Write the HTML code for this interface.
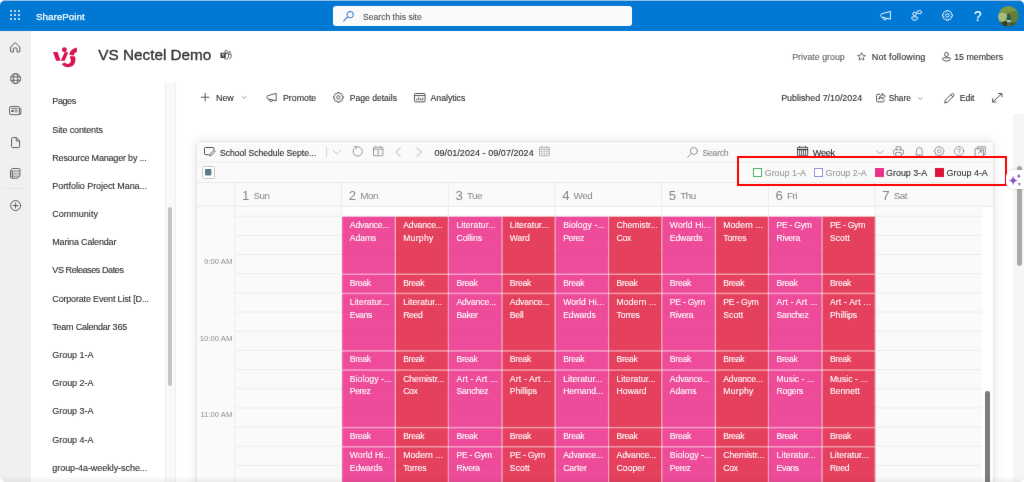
<!DOCTYPE html>
<html lang="en">
<head>
<meta charset="utf-8">
<title>VS Nectel Demo - School Schedule</title>
<style>
*{box-sizing:border-box;margin:0;padding:0}
html,body{width:1024px;height:482px;overflow:hidden;background:#fff}
body{font-family:"Liberation Sans",sans-serif;font-size:9px;color:#323130;position:relative}
#wrap{position:absolute;left:0;top:0;width:1024px;height:482px;overflow:hidden;background:#fff;will-change:transform;filter:url(#soft)}
.abs{position:absolute}
.t{position:absolute;white-space:nowrap;line-height:12px;height:12px;-webkit-text-stroke:.12px currentColor}
svg{position:absolute;overflow:visible}
/* top bar */
#topbar{position:absolute;left:0;top:0;width:1024px;height:31px;background:#0078d4;border-radius:5px 5px 0 0;border-top:1px solid #9cc3e4}
#search{position:absolute;left:332.5px;top:5.6px;width:299.3px;height:20.5px;background:#fafafa;border-radius:2.5px;border:1px solid #fff}
/* rail */
#rail{position:absolute;left:0;top:31px;width:30.6px;height:451px;background:#f0f0f0;border-radius:0 0 0 7px}
/* nav */
#navtrack{position:absolute;left:165.300px;top:82.500px;width:10.600px;height:400px;background:#f8f8f8;border-left:1px solid #f0f0f0;border-right:1px solid #f0f0f0}
#navthumb{position:absolute;left:168.2px;top:207px;width:4px;height:178.5px;background:#c4c4c4;border-radius:2px}
.nav{left:52.300px;color:#323130;font-size:9px}
/* calendar */
#cal{position:absolute;left:197px;top:141.700px;width:796.200px;height:360px;background:#fafafa;box-shadow:0 0 11px rgba(0,0,0,.12),0 0 2px rgba(0,0,0,.14)}
.hl{position:absolute;left:0;height:1px;background:#ececec}
.vl{position:absolute;top:0;width:1px;background:#ececec}
.ev{position:absolute;color:#fff;font-size:8.600px;line-height:12.800px;white-space:nowrap;-webkit-text-stroke:.1px #fff}
.dn{position:absolute;top:187.600px;font-size:13.200px;line-height:15px;color:#858585}
.dw{position:absolute;top:190.100px;font-size:9.800px;letter-spacing:-.45px;line-height:12px;color:#858585}
.tl{position:absolute;width:35.300px;text-align:right;font-size:7.700px;color:#8c8c8c;line-height:10px;left:0}
</style>
</head>
<body>
<svg width="0" height="0" style="position:absolute"><defs><filter id="soft" x="0" y="0" width="100%" height="100%" color-interpolation-filters="sRGB"><feConvolveMatrix order="3" kernelMatrix="0.0028 0.0470 0.0028 0.0470 0.8008 0.0470 0.0028 0.0470 0.0028" edgeMode="duplicate" preserveAlpha="true"/></filter></defs></svg>
<div id="wrap">

<!-- ===== TOP BAR ===== -->
<div id="topbar"></div>
<svg style="left:10px;top:10.200px" width="10" height="10" viewBox="0 0 10 10" fill="#fff">
<rect x="0.2" y="0.2" width="1.7" height="1.7"/><rect x="4.15" y="0.2" width="1.7" height="1.7"/><rect x="8.1" y="0.2" width="1.7" height="1.7"/>
<rect x="0.2" y="4.15" width="1.7" height="1.7"/><rect x="4.15" y="4.15" width="1.7" height="1.7"/><rect x="8.1" y="4.15" width="1.7" height="1.7"/>
<rect x="0.2" y="8.1" width="1.7" height="1.7"/><rect x="4.15" y="8.1" width="1.7" height="1.7"/><rect x="8.1" y="8.1" width="1.7" height="1.7"/>
</svg>
<div class="t" style="left:35.900px;top:11.300px;font-size:9.800px;letter-spacing:.04px;color:#fff;-webkit-text-stroke:.25px #fff">SharePoint</div>
<div id="search"></div>
<svg style="left:343.4px;top:11.2px" width="11" height="10.4" viewBox="0 0 11 10.4" fill="none" stroke="#2b7cd3" stroke-width="1.05" stroke-linecap="round">
<circle cx="7.1" cy="3.7" r="3.1"/><path d="M4.8 6 L0.7 9.9"/>
</svg>
<div class="t" style="left:363px;top:10.900px;font-size:8.600px;color:#555">Search this site</div>

<!-- top-right icons -->
<svg style="left:880px;top:10.5px" width="11.5" height="10" viewBox="0 0 11.5 10" fill="none" stroke="#fff" stroke-width="0.95" stroke-linejoin="round" stroke-linecap="round">
<path d="M10.4 0.8 L10.4 8.2 L4 6.6 L1.4 6 Q0.6 5.6 0.6 4.5 Q0.6 3.4 1.4 3 Z"/><path d="M3 6.6 Q3 8.9 5 8.9 Q6.6 8.9 6.8 7.4"/>
</svg>
<svg style="left:911px;top:10px" width="11.5" height="11" viewBox="0 0 11.5 11" fill="none" stroke="#fff" stroke-width="0.95">
<circle cx="3.6" cy="3.9" r="1.7"/><ellipse cx="8.3" cy="2.2" rx="2.5" ry="1.5"/><path d="M0.6 7.6 Q0.6 6.9 1.4 6.9 L5.8 6.9 Q6.6 6.9 6.6 7.6 Q6.4 10.3 3.6 10.3 Q0.8 10.3 0.6 7.6 Z"/>
</svg>
<svg style="left:941.600px;top:10.200px" width="10.900" height="10.900" viewBox="0 0 11 11" fill="none" stroke="#fff" stroke-width="0.950" stroke-linejoin="round"><path d="M4.35 1.67 L4.59 0.53 L6.41 0.53 L6.65 1.67 L7.40 1.98 L8.37 1.35 L9.65 2.63 L9.02 3.60 L9.33 4.35 L10.47 4.59 L10.47 6.41 L9.33 6.65 L9.02 7.40 L9.65 8.37 L8.37 9.65 L7.40 9.02 L6.65 9.33 L6.41 10.47 L4.59 10.47 L4.35 9.33 L3.60 9.02 L2.63 9.65 L1.35 8.37 L1.98 7.40 L1.67 6.65 L0.53 6.41 L0.53 4.59 L1.67 4.35 L1.98 3.60 L1.35 2.63 L2.63 1.35 L3.60 1.98 Z"/><circle cx="5.5" cy="5.5" r="1.700"/></svg>
<div class="t" style="left:973.500px;top:7.900px;font-size:15px;line-height:16px;height:16px;color:#fff;transform:scaleX(.92);transform-origin:0 0">?</div>
<svg style="left:998.300px;top:5.600px" width="20.700" height="20.700" viewBox="0 0 20.700 20.700">
<defs><clipPath id="avc"><circle cx="10.350" cy="10.350" r="10.350"/></clipPath><filter id="avb" x="-20%" y="-20%" width="140%" height="140%"><feGaussianBlur stdDeviation="0.700"/></filter></defs>
<g clip-path="url(#avc)"><g filter="url(#avb)">
<rect x="-2" y="-2" width="25" height="25" fill="#6f8c40"/>
<rect x="-2" y="-2" width="25" height="7.500" fill="#7c9a44"/>
<ellipse cx="4.500" cy="11" rx="5" ry="4.500" fill="#a3bd7e"/>
<ellipse cx="16.500" cy="11.500" rx="4.500" ry="6.500" fill="#5f7f3a"/>
<rect x="-2" y="16.500" width="25" height="6" fill="#4a5a2c"/>
<ellipse cx="8" cy="17.500" rx="3.500" ry="2.500" fill="#2e3a20"/>
<ellipse cx="10.700" cy="9.300" rx="1.500" ry="1.600" fill="#5b3d2c"/>
<rect x="8.600" y="10.600" width="4.400" height="4.600" rx="1.200" fill="#2c5a4e"/>
<rect x="8.600" y="14" width="4.200" height="2.200" rx=".8" fill="#b4c4bc"/>
<rect x="9.200" y="16" width="3" height="4" fill="#556a60"/>
</g></g></svg>

<!-- ===== LEFT RAIL ===== -->
<div id="rail"></div>
<div class="abs" style="left:3px;top:188.3px;width:24px;height:1px;background:#e6e6e6"></div>
<!-- home -->
<svg style="left:10px;top:42px" width="10.4" height="10.6" viewBox="0 0 10.4 10.6" fill="none" stroke="#555" stroke-width="0.95" stroke-linejoin="round">
<path d="M0.6 4.9 L5.2 0.7 L9.8 4.900 L9.8 9.400 Q9.800 10 9.200 10 L7 10 L7 6.500 Q7 6 6.500 6 L3.900 6 Q3.400 6 3.400 6.500 L3.400 10 L1.200 10 Q0.600 10 0.600 9.400 Z"/>
</svg>
<!-- globe -->
<svg style="left:9.6px;top:73.4px" width="11.2" height="11.2" viewBox="0 0 11.2 11.2" fill="none" stroke="#555" stroke-width="0.9">
<circle cx="5.6" cy="5.6" r="5"/><ellipse cx="5.6" cy="5.6" rx="2.2" ry="5"/><path d="M0.8 3.9 H10.4 M0.8 7.3 H10.4"/>
</svg>
<!-- news -->
<svg style="left:9px;top:105.5px" width="12.4" height="9.2" viewBox="0 0 12.4 9.200" fill="none" stroke="#555" stroke-width="0.9">
<rect x="0.5" y="0.5" width="9.9" height="8.2" rx="1.6"/><path d="M10.4 2.2 Q11.900 2.200 11.900 3.700 L11.900 7 Q11.900 8.700 10.200 8.700"/><rect x="2.3" y="3.9" width="2.3" height="2.1" fill="#555" stroke="none"/><path d="M5.8 4.200 H8.600 M5.800 5.800 H8.600 M2.300 2.500 H8.600" stroke-width=".8"/>
</svg>
<!-- file -->
<svg style="left:10.5px;top:136.500px" width="9.200" height="11.200" viewBox="0 0 9.200 11.200" fill="none" stroke="#555" stroke-width="0.95" stroke-linejoin="round">
<path d="M1.700 0.600 L5.400 0.600 L8.600 3.800 L8.600 9.500 Q8.600 10.600 7.500 10.600 L1.700 10.600 Q0.600 10.600 0.600 9.500 L0.600 1.700 Q0.600 0.600 1.700 0.600 Z M5.300 0.700 L5.300 3.900 L8.500 3.900"/>
</svg>
<!-- list -->
<svg style="left:9.900px;top:167.800px" width="10.400" height="10.800" viewBox="0 0 10.400 10.800" fill="none" stroke="#555" stroke-width="0.900" stroke-linejoin="round">
<path d="M2.300 0.500 L8.900 0.500 Q9.900 0.500 9.900 1.500 L9.900 7.900 L7.700 10.200 L1.500 10.200 Q0.500 10.200 0.500 9.200 L0.500 2.300 Z"/><path d="M0.700 3 H9.700 M2.500 3 V10" stroke-width=".75"/><path d="M0.700 5.100 H9.700 M0.700 6.900 H9.700 M0.700 8.600 H9" stroke-width=".5"/>
</svg>
<!-- plus circle -->
<svg style="left:9.500px;top:199.700px" width="11.200" height="11.200" viewBox="0 0 11.200 11.200" fill="none" stroke="#555" stroke-width="0.95" stroke-linecap="round">
<circle cx="5.600" cy="5.600" r="5"/><path d="M5.600 3.100 V8.100 M3.100 5.600 H8.100"/>
</svg>

<!-- ===== SITE HEADER ===== -->
<svg style="left:48px;top:42px" width="36" height="30" viewBox="0 0 36 30">
<g fill="#d9134f">
<path d="M5 10 L9.5 10 L12.600 18.800 L8.100 18.800 Z"/>
<path d="M16.600 10.300 L20.300 10.300 L16.700 18.800 L12.800 18.800 Z"/>
<circle cx="16.400" cy="7.800" r="2.450"/>
<path d="M28.900 5.500 L28.900 9.700 Q26.200 10.500 25.700 13.500 L21.200 12.700 Q22.200 6.800 28.900 5.500 Z"/>
<path d="M23.300 14 L27 14.400 Q28.200 17.200 27 20.600 Q25.200 25.200 19.900 25.300 Q15.600 25.100 13.800 22.100 L16.600 20.500 Q17.800 21.900 19.900 21.900 Q22.700 21.700 22.900 18.600 Q22.900 16.500 21.600 15 Z"/>
</g>
</svg>
<div class="t" style="left:98.3px;top:46.4px;font-size:15.3px;line-height:18px;height:18px;color:#323130;-webkit-text-stroke:.32px #323130">VS Nectel Demo</div>
<!-- teams icon -->
<svg style="left:219.500px;top:50px" width="12" height="10" viewBox="0 0 12 10" fill="none" stroke="#4a4a4a" stroke-width="0.800">
<circle cx="6.100" cy="1.700" r="1.350"/><circle cx="9.600" cy="2.400" r=".9"/><path d="M5.900 3.700 L8.500 3.700 L8.500 7 Q8.300 9.100 6.100 9.200 Q4.600 9.100 3.900 8.100"/><path d="M8.800 4.300 L11.200 4.300 L11.200 6.900 Q11 8.400 9.300 8.500"/><rect x="0.500" y="2.700" width="5.200" height="5.200" rx=".5" fill="#3b3b3b" stroke="none"/><path d="M1.800 4.200 H4.400 M3.100 4.200 V6.800" stroke="#fff" stroke-width=".8"/>
</svg>

<div class="t" style="left:792.200px;top:51px;font-size:8.850px;color:#666">Private group</div>
<svg style="left:857.400px;top:51.700px" width="9" height="8.800" viewBox="0 0 24 23.500" fill="none" stroke="#444" stroke-width="2.100" stroke-linejoin="round">
<path d="M12 1.800 L15.100 8.400 L22.300 9.300 L17 14.300 L18.400 21.500 L12 18 L5.600 21.500 L7 14.300 L1.700 9.300 L8.900 8.400 Z"/>
</svg>
<div class="t" style="left:871.800px;top:51px;font-size:9px;letter-spacing:.17px">Not following</div>
<svg style="left:941.700px;top:51.600px" width="9" height="9.600" viewBox="0 0 9 9.600" fill="none" stroke="#444" stroke-width="0.9">
<circle cx="4.500" cy="2.500" r="2"/><path d="M0.500 6.700 Q0.500 5.800 1.400 5.800 L7.600 5.800 Q8.500 5.800 8.500 6.700 Q8.300 9.100 4.500 9.100 Q0.700 9.100 0.500 6.700 Z"/>
</svg>
<div class="t" style="left:954.200px;top:51px;font-size:8.800px">15 members</div>

<!-- ===== NAV ===== -->
<div id="navtrack"></div><div id="navthumb"></div>
<div class="t nav" style="top:95.40px;letter-spacing:-0.40px">Pages</div>
<div class="t nav" style="top:123.58px;letter-spacing:-0.12px">Site contents</div>
<div class="t nav" style="top:151.75px;letter-spacing:-0.19px">Resource Manager by ...</div>
<div class="t nav" style="top:179.93px;letter-spacing:-0.06px">Portfolio Project Mana...</div>
<div class="t nav" style="top:208.10px;letter-spacing:0.01px">Community</div>
<div class="t nav" style="top:236.28px;letter-spacing:-0.17px">Marina Calendar</div>
<div class="t nav" style="top:264.45px;letter-spacing:-0.40px">VS Releases Dates</div>
<div class="t nav" style="top:292.62px;letter-spacing:-0.17px">Corporate Event List [D...</div>
<div class="t nav" style="top:320.80px;letter-spacing:-0.23px">Team Calendar 365</div>
<div class="t nav" style="top:348.98px;letter-spacing:-0.05px">Group 1-A</div>
<div class="t nav" style="top:377.15px;letter-spacing:-0.05px">Group 2-A</div>
<div class="t nav" style="top:405.33px;letter-spacing:-0.05px">Group 3-A</div>
<div class="t nav" style="top:433.50px;letter-spacing:-0.05px">Group 4-A</div>
<div class="t nav" style="top:461.68px;letter-spacing:-0.05px">group-4a-weekly-sche...</div>

<!-- ===== COMMAND BAR ===== -->
<svg style="left:201px;top:93.300px" width="8.400" height="8.400" viewBox="0 0 8.400 8.400" fill="none" stroke="#444" stroke-width="0.9"><path d="M4.200 0 V8.400 M0 4.200 H8.400"/></svg>
<div class="t" style="left:216px;top:91.600px;font-size:8.900px">New</div>
<svg style="left:241.800px;top:96.200px" width="4.600" height="3" viewBox="0 0 4.600 3" fill="none" stroke="#666" stroke-width="0.700"><path d="M0.300 0.400 L2.300 2.500 L4.300 0.400"/></svg>
<svg style="left:266px;top:93px" width="11.400" height="9.600" viewBox="0 0 11.500 10" fill="none" stroke="#444" stroke-width="0.900" stroke-linejoin="round" stroke-linecap="round">
<path d="M10.400 0.800 L10.400 8.200 L4 6.600 L1.400 6 Q0.600 5.600 0.600 4.500 Q0.600 3.400 1.400 3 Z"/><path d="M3 6.600 Q3 8.900 5 8.900 Q6.600 8.900 6.800 7.400"/>
</svg>
<div class="t" style="left:283px;top:91.600px;font-size:8.800px">Promote</div>
<svg style="left:333px;top:92.300px" width="10.800" height="10.800" viewBox="0 0 11 11" fill="none" stroke="#444" stroke-width="0.900" stroke-linejoin="round"><path d="M4.35 1.67 L4.59 0.53 L6.41 0.53 L6.65 1.67 L7.40 1.98 L8.37 1.35 L9.65 2.63 L9.02 3.60 L9.33 4.35 L10.47 4.59 L10.47 6.41 L9.33 6.65 L9.02 7.40 L9.65 8.37 L8.37 9.65 L7.40 9.02 L6.65 9.33 L6.41 10.47 L4.59 10.47 L4.35 9.33 L3.60 9.02 L2.63 9.65 L1.35 8.37 L1.98 7.40 L1.67 6.65 L0.53 6.41 L0.53 4.59 L1.67 4.35 L1.98 3.60 L1.35 2.63 L2.63 1.35 L3.60 1.98 Z"/><circle cx="5.5" cy="5.5" r="1.700"/></svg>
<div class="t" style="left:349.700px;top:91.600px;font-size:8.600px">Page details</div>
<svg style="left:414px;top:93px" width="11.600" height="9.400" viewBox="0 0 11.600 9.400" fill="none" stroke="#444" stroke-width="0.900">
<rect x="0.500" y="0.500" width="10.600" height="8.400" rx="1"/><path d="M0.500 2.600 H11.100"/><path d="M2.800 7.400 V5.600 M4.800 7.400 V4.300 M6.800 7.400 V5.300 M8.800 7.400 V4.700" stroke-width=".95"/>
</svg>
<div class="t" style="left:430.500px;top:91.600px;font-size:8.700px">Analytics</div>

<div class="t" style="left:781.200px;top:92px;font-size:8.900px">Published 7/10/2024</div>
<svg style="left:876px;top:93.300px" width="9.800" height="9.400" viewBox="0 0 9.800 9.400" fill="none" stroke="#444" stroke-width="0.900" stroke-linejoin="round" stroke-linecap="round">
<path d="M4 1.200 L2 1.200 Q0.500 1.200 0.500 2.700 L0.500 7.400 Q0.500 8.900 2 8.900 L6.600 8.900 Q8.100 8.900 8.100 7.400 L8.100 6.900"/><path d="M6.300 0.600 L9.300 3.300 L6.300 6 L6.300 4.500 Q4 4.300 2.700 6.300 Q3 2.500 6.300 2.100 Z"/>
</svg>
<div class="t" style="left:888.700px;top:92px;font-size:8.300px">Share</div>
<svg style="left:918.200px;top:96.600px" width="4.800" height="3" viewBox="0 0 4.800 3" fill="none" stroke="#666" stroke-width="0.700"><path d="M0.300 0.400 L2.400 2.500 L4.500 0.400"/></svg>
<svg style="left:943.700px;top:93px" width="10.600" height="10.600" viewBox="0 0 10.600 10.600" fill="none" stroke="#444" stroke-width="0.900" stroke-linejoin="round">
<path d="M7.600 0.900 Q8.600 0 9.600 1 Q10.600 2 9.700 3 L3.500 9.200 L0.600 10 L1.400 7.100 Z M6.800 1.700 L8.900 3.800"/>
</svg>
<div class="t" style="left:959.700px;top:92px;font-size:8.600px">Edit</div>
<svg style="left:991.700px;top:93px" width="10.600" height="9.600" viewBox="0 0 10.600 9.600" fill="none" stroke="#444" stroke-width="0.900" stroke-linecap="round" stroke-linejoin="round">
<path d="M0.800 8.800 L9.800 0.800 M6.400 0.600 L10 0.600 L10 4 M0.600 5.600 L0.600 9 L4.200 9"/>
</svg>

<!-- page scrollbar -->
<div class="abs" style="left:1013.2px;top:113.500px;width:11px;height:370px;background:#f6f6f6;border-radius:0 0 7px 0"></div>
<div class="abs" style="left:1017px;top:166.400px;width:4.600px;height:100px;background:#a8a8a8;border-radius:2.400px"></div>

<!-- ===== CALENDAR WIDGET ===== -->
<div id="cal">

</div>
<svg style="left:0;top:0" width="1024" height="482" viewBox="0 0 1024 482"><rect x="341.59" y="206.7" width="533.45" height="290" fill="#fff"/>
<rect x="981.73" y="206.7" width="11.47" height="290" fill="#fff"/>
<rect x="197.0" y="161.50" width="796.20" height="1" fill="#ececec"/>
<rect x="197.0" y="182.00" width="796.20" height="1" fill="#ececec"/>
<rect x="197.0" y="205.70" width="796.20" height="1" fill="#ececec"/>
<rect x="234.90" y="215.70" width="746.83" height="1" fill="#ececec"/>
<rect x="234.90" y="234.87" width="746.83" height="1" fill="#ececec"/>
<rect x="234.90" y="254.04" width="746.83" height="1" fill="#ececec"/>
<rect x="234.90" y="273.21" width="746.83" height="1" fill="#ececec"/>
<rect x="234.90" y="292.38" width="746.83" height="1" fill="#ececec"/>
<rect x="234.90" y="311.55" width="746.83" height="1" fill="#ececec"/>
<rect x="234.90" y="330.72" width="746.83" height="1" fill="#ececec"/>
<rect x="234.90" y="349.89" width="746.83" height="1" fill="#ececec"/>
<rect x="234.90" y="369.06" width="746.83" height="1" fill="#ececec"/>
<rect x="234.90" y="388.23" width="746.83" height="1" fill="#ececec"/>
<rect x="234.90" y="407.40" width="746.83" height="1" fill="#ececec"/>
<rect x="234.90" y="426.57" width="746.83" height="1" fill="#ececec"/>
<rect x="234.90" y="445.74" width="746.83" height="1" fill="#ececec"/>
<rect x="234.90" y="464.91" width="746.83" height="1" fill="#ececec"/>
<rect x="234.40" y="182.5" width="1" height="310" fill="#ececec"/>
<rect x="341.09" y="182.5" width="1" height="310" fill="#ececec"/>
<rect x="447.78" y="182.5" width="1" height="310" fill="#ececec"/>
<rect x="554.47" y="182.5" width="1" height="310" fill="#ececec"/>
<rect x="661.16" y="182.5" width="1" height="310" fill="#ececec"/>
<rect x="767.85" y="182.5" width="1" height="310" fill="#ececec"/>
<rect x="874.54" y="182.5" width="1" height="310" fill="#ececec"/>
<rect x="342.19" y="216.70" width="53.34" height="280" fill="#ee4c9a"/>
<rect x="395.54" y="216.70" width="53.05" height="280" fill="#e5405d"/>
<rect x="394.69" y="216.70" width="1.1" height="280" fill="#fff" fill-opacity=".5"/>
<rect x="447.73" y="216.70" width="0.9" height="280" fill="#fff" fill-opacity=".5"/>
<rect x="448.88" y="216.70" width="53.34" height="280" fill="#ee4c9a"/>
<rect x="502.23" y="216.70" width="53.05" height="280" fill="#e5405d"/>
<rect x="501.38" y="216.70" width="1.1" height="280" fill="#fff" fill-opacity=".5"/>
<rect x="554.42" y="216.70" width="0.9" height="280" fill="#fff" fill-opacity=".5"/>
<rect x="555.57" y="216.70" width="53.34" height="280" fill="#ee4c9a"/>
<rect x="608.92" y="216.70" width="53.05" height="280" fill="#e5405d"/>
<rect x="608.07" y="216.70" width="1.1" height="280" fill="#fff" fill-opacity=".5"/>
<rect x="661.11" y="216.70" width="0.9" height="280" fill="#fff" fill-opacity=".5"/>
<rect x="662.26" y="216.70" width="53.34" height="280" fill="#ee4c9a"/>
<rect x="715.61" y="216.70" width="53.05" height="280" fill="#e5405d"/>
<rect x="714.75" y="216.70" width="1.1" height="280" fill="#fff" fill-opacity=".5"/>
<rect x="767.80" y="216.70" width="0.9" height="280" fill="#fff" fill-opacity=".5"/>
<rect x="768.95" y="216.70" width="53.34" height="280" fill="#ee4c9a"/>
<rect x="822.30" y="216.70" width="53.05" height="280" fill="#e5405d"/>
<rect x="821.45" y="216.70" width="1.1" height="280" fill="#fff" fill-opacity=".5"/>
<rect x="874.49" y="216.70" width="0.9" height="280" fill="#fff" fill-opacity=".5"/>
<rect x="342.19" y="234.87" width="533.15" height="1" fill="#000" fill-opacity=".035"/>
<rect x="342.19" y="254.04" width="533.15" height="1" fill="#000" fill-opacity=".035"/>
<rect x="342.19" y="311.55" width="533.15" height="1" fill="#000" fill-opacity=".035"/>
<rect x="342.19" y="330.72" width="533.15" height="1" fill="#000" fill-opacity=".035"/>
<rect x="342.19" y="388.23" width="533.15" height="1" fill="#000" fill-opacity=".035"/>
<rect x="342.19" y="407.40" width="533.15" height="1" fill="#000" fill-opacity=".035"/>
<rect x="342.19" y="464.91" width="533.15" height="1" fill="#000" fill-opacity=".035"/>
<rect x="342.19" y="484.08" width="533.15" height="1" fill="#000" fill-opacity=".035"/>
<rect x="342.19" y="273.51" width="533.15" height="1.5" fill="#fff" fill-opacity=".48"/>
<rect x="342.19" y="292.68" width="533.15" height="1.5" fill="#fff" fill-opacity=".48"/>
<rect x="342.19" y="350.19" width="533.15" height="1.5" fill="#fff" fill-opacity=".48"/>
<rect x="342.19" y="369.36" width="533.15" height="1.5" fill="#fff" fill-opacity=".48"/>
<rect x="342.19" y="426.87" width="533.15" height="1.5" fill="#fff" fill-opacity=".48"/>
<rect x="342.19" y="446.04" width="533.15" height="1.5" fill="#fff" fill-opacity=".48"/>
<rect x="342.19" y="503.55" width="533.15" height="1.5" fill="#fff" fill-opacity=".48"/>
<rect x="342.19" y="522.72" width="533.15" height="1.5" fill="#fff" fill-opacity=".48"/></svg>
<div class="dn" style="left:242.10px">1</div>
<div class="dw" style="left:253.50px">Sun</div>
<div class="dn" style="left:348.79px">2</div>
<div class="dw" style="left:360.19px">Mon</div>
<div class="dn" style="left:455.48px">3</div>
<div class="dw" style="left:466.88px">Tue</div>
<div class="dn" style="left:562.17px">4</div>
<div class="dw" style="left:573.57px">Wed</div>
<div class="dn" style="left:668.86px">5</div>
<div class="dw" style="left:680.26px">Thu</div>
<div class="dn" style="left:775.55px">6</div>
<div class="dw" style="left:786.95px">Fri</div>
<div class="dn" style="left:882.24px">7</div>
<div class="dw" style="left:893.64px">Sat</div>
<div class="tl" style="left:197.0px;top:256.94px">9:00 AM</div>
<div class="tl" style="left:197.0px;top:333.62px">10:00 AM</div>
<div class="tl" style="left:197.0px;top:410.30px">11:00 AM</div>
<div class="ev" style="left:349.79px;top:219.30px"><span style="letter-spacing:-0.11px">Advance...</span><br><span style="letter-spacing:-0.03px">Adams</span></div>
<div class="ev" style="left:349.79px;top:276.81px"><span style="letter-spacing:-0.27px">Break</span></div>
<div class="ev" style="left:403.14px;top:219.30px"><span style="letter-spacing:-0.11px">Advance...</span><br><span style="letter-spacing:0.31px">Murphy</span></div>
<div class="ev" style="left:403.14px;top:276.81px"><span style="letter-spacing:-0.27px">Break</span></div>
<div class="ev" style="left:456.48px;top:219.30px"><span style="letter-spacing:0.07px">Literatur...</span><br><span style="letter-spacing:-0.04px">Collins</span></div>
<div class="ev" style="left:456.48px;top:276.81px"><span style="letter-spacing:-0.27px">Break</span></div>
<div class="ev" style="left:509.83px;top:219.30px"><span style="letter-spacing:0.07px">Literatur...</span><br><span style="letter-spacing:-0.05px">Ward</span></div>
<div class="ev" style="left:509.83px;top:276.81px"><span style="letter-spacing:-0.27px">Break</span></div>
<div class="ev" style="left:563.17px;top:219.30px"><span style="letter-spacing:0.09px">Biology -...</span><br><span style="letter-spacing:-0.35px">Perez</span></div>
<div class="ev" style="left:563.17px;top:276.81px"><span style="letter-spacing:-0.27px">Break</span></div>
<div class="ev" style="left:616.52px;top:219.30px"><span style="letter-spacing:0.00px">Chemistr...</span><br><span style="letter-spacing:-0.27px">Cox</span></div>
<div class="ev" style="left:616.52px;top:276.81px"><span style="letter-spacing:-0.27px">Break</span></div>
<div class="ev" style="left:669.86px;top:219.30px"><span style="letter-spacing:0.10px">World Hi...</span><br><span style="letter-spacing:-0.13px">Edwards</span></div>
<div class="ev" style="left:669.86px;top:276.81px"><span style="letter-spacing:-0.27px">Break</span></div>
<div class="ev" style="left:723.21px;top:219.30px"><span style="letter-spacing:0.11px">Modern ...</span><br><span style="letter-spacing:-0.10px">Torres</span></div>
<div class="ev" style="left:723.21px;top:276.81px"><span style="letter-spacing:-0.27px">Break</span></div>
<div class="ev" style="left:776.55px;top:219.30px"><span style="letter-spacing:-0.26px">PE - Gym</span><br><span style="letter-spacing:-0.24px">Rivera</span></div>
<div class="ev" style="left:776.55px;top:276.81px"><span style="letter-spacing:-0.27px">Break</span></div>
<div class="ev" style="left:829.90px;top:219.30px"><span style="letter-spacing:-0.26px">PE - Gym</span><br><span style="letter-spacing:0.08px">Scott</span></div>
<div class="ev" style="left:829.90px;top:276.81px"><span style="letter-spacing:-0.27px">Break</span></div>
<div class="ev" style="left:349.79px;top:295.98px"><span style="letter-spacing:0.07px">Literatur...</span><br><span style="letter-spacing:-0.35px">Evans</span></div>
<div class="ev" style="left:349.79px;top:353.49px"><span style="letter-spacing:-0.27px">Break</span></div>
<div class="ev" style="left:403.14px;top:295.98px"><span style="letter-spacing:0.07px">Literatur...</span><br><span style="letter-spacing:-0.29px">Reed</span></div>
<div class="ev" style="left:403.14px;top:353.49px"><span style="letter-spacing:-0.27px">Break</span></div>
<div class="ev" style="left:456.48px;top:295.98px"><span style="letter-spacing:-0.11px">Advance...</span><br><span style="letter-spacing:-0.27px">Baker</span></div>
<div class="ev" style="left:456.48px;top:353.49px"><span style="letter-spacing:-0.27px">Break</span></div>
<div class="ev" style="left:509.83px;top:295.98px"><span style="letter-spacing:-0.11px">Advance...</span><br><span style="letter-spacing:-0.19px">Bell</span></div>
<div class="ev" style="left:509.83px;top:353.49px"><span style="letter-spacing:-0.27px">Break</span></div>
<div class="ev" style="left:563.17px;top:295.98px"><span style="letter-spacing:0.10px">World Hi...</span><br><span style="letter-spacing:-0.13px">Edwards</span></div>
<div class="ev" style="left:563.17px;top:353.49px"><span style="letter-spacing:-0.27px">Break</span></div>
<div class="ev" style="left:616.52px;top:295.98px"><span style="letter-spacing:0.11px">Modern ...</span><br><span style="letter-spacing:-0.10px">Torres</span></div>
<div class="ev" style="left:616.52px;top:353.49px"><span style="letter-spacing:-0.27px">Break</span></div>
<div class="ev" style="left:669.86px;top:295.98px"><span style="letter-spacing:-0.26px">PE - Gym</span><br><span style="letter-spacing:-0.24px">Rivera</span></div>
<div class="ev" style="left:669.86px;top:353.49px"><span style="letter-spacing:-0.27px">Break</span></div>
<div class="ev" style="left:723.21px;top:295.98px"><span style="letter-spacing:-0.26px">PE - Gym</span><br><span style="letter-spacing:0.08px">Scott</span></div>
<div class="ev" style="left:723.21px;top:353.49px"><span style="letter-spacing:-0.27px">Break</span></div>
<div class="ev" style="left:776.55px;top:295.98px"><span style="letter-spacing:0.19px">Art - Art ...</span><br><span style="letter-spacing:-0.21px">Sanchez</span></div>
<div class="ev" style="left:776.55px;top:353.49px"><span style="letter-spacing:-0.27px">Break</span></div>
<div class="ev" style="left:829.90px;top:295.98px"><span style="letter-spacing:0.19px">Art - Art ...</span><br><span style="letter-spacing:-0.00px">Phillips</span></div>
<div class="ev" style="left:829.90px;top:353.49px"><span style="letter-spacing:-0.27px">Break</span></div>
<div class="ev" style="left:349.79px;top:372.66px"><span style="letter-spacing:0.09px">Biology -...</span><br><span style="letter-spacing:-0.35px">Perez</span></div>
<div class="ev" style="left:349.79px;top:430.17px"><span style="letter-spacing:-0.27px">Break</span></div>
<div class="ev" style="left:403.14px;top:372.66px"><span style="letter-spacing:0.00px">Chemistr...</span><br><span style="letter-spacing:-0.27px">Cox</span></div>
<div class="ev" style="left:403.14px;top:430.17px"><span style="letter-spacing:-0.27px">Break</span></div>
<div class="ev" style="left:456.48px;top:372.66px"><span style="letter-spacing:0.19px">Art - Art ...</span><br><span style="letter-spacing:-0.21px">Sanchez</span></div>
<div class="ev" style="left:456.48px;top:430.17px"><span style="letter-spacing:-0.27px">Break</span></div>
<div class="ev" style="left:509.83px;top:372.66px"><span style="letter-spacing:0.19px">Art - Art ...</span><br><span style="letter-spacing:-0.00px">Phillips</span></div>
<div class="ev" style="left:509.83px;top:430.17px"><span style="letter-spacing:-0.27px">Break</span></div>
<div class="ev" style="left:563.17px;top:372.66px"><span style="letter-spacing:0.07px">Literatur...</span><br><span style="letter-spacing:-0.03px">Hernand...</span></div>
<div class="ev" style="left:563.17px;top:430.17px"><span style="letter-spacing:-0.27px">Break</span></div>
<div class="ev" style="left:616.52px;top:372.66px"><span style="letter-spacing:0.07px">Literatur...</span><br><span style="letter-spacing:0.10px">Howard</span></div>
<div class="ev" style="left:616.52px;top:430.17px"><span style="letter-spacing:-0.27px">Break</span></div>
<div class="ev" style="left:669.86px;top:372.66px"><span style="letter-spacing:-0.11px">Advance...</span><br><span style="letter-spacing:-0.03px">Adams</span></div>
<div class="ev" style="left:669.86px;top:430.17px"><span style="letter-spacing:-0.27px">Break</span></div>
<div class="ev" style="left:723.21px;top:372.66px"><span style="letter-spacing:-0.11px">Advance...</span><br><span style="letter-spacing:0.31px">Murphy</span></div>
<div class="ev" style="left:723.21px;top:430.17px"><span style="letter-spacing:-0.27px">Break</span></div>
<div class="ev" style="left:776.55px;top:372.66px"><span style="letter-spacing:0.04px">Music - ...</span><br><span style="letter-spacing:-0.17px">Rogers</span></div>
<div class="ev" style="left:776.55px;top:430.17px"><span style="letter-spacing:-0.27px">Break</span></div>
<div class="ev" style="left:829.90px;top:372.66px"><span style="letter-spacing:0.04px">Music - ...</span><br><span style="letter-spacing:0.05px">Bennett</span></div>
<div class="ev" style="left:829.90px;top:430.17px"><span style="letter-spacing:-0.27px">Break</span></div>
<div class="ev" style="left:349.79px;top:449.34px"><span style="letter-spacing:0.10px">World Hi...</span><br><span style="letter-spacing:-0.13px">Edwards</span></div>
<div class="ev" style="left:349.79px;top:506.85px"><span style="letter-spacing:-0.27px">Break</span></div>
<div class="ev" style="left:403.14px;top:449.34px"><span style="letter-spacing:0.11px">Modern ...</span><br><span style="letter-spacing:-0.10px">Torres</span></div>
<div class="ev" style="left:403.14px;top:506.85px"><span style="letter-spacing:-0.27px">Break</span></div>
<div class="ev" style="left:456.48px;top:449.34px"><span style="letter-spacing:-0.26px">PE - Gym</span><br><span style="letter-spacing:-0.24px">Rivera</span></div>
<div class="ev" style="left:456.48px;top:506.85px"><span style="letter-spacing:-0.27px">Break</span></div>
<div class="ev" style="left:509.83px;top:449.34px"><span style="letter-spacing:-0.26px">PE - Gym</span><br><span style="letter-spacing:0.08px">Scott</span></div>
<div class="ev" style="left:509.83px;top:506.85px"><span style="letter-spacing:-0.27px">Break</span></div>
<div class="ev" style="left:563.17px;top:449.34px"><span style="letter-spacing:-0.11px">Advance...</span><br><span style="letter-spacing:-0.02px">Carter</span></div>
<div class="ev" style="left:563.17px;top:506.85px"><span style="letter-spacing:-0.27px">Break</span></div>
<div class="ev" style="left:616.52px;top:449.34px"><span style="letter-spacing:-0.11px">Advance...</span><br><span style="letter-spacing:0.07px">Cooper</span></div>
<div class="ev" style="left:616.52px;top:506.85px"><span style="letter-spacing:-0.27px">Break</span></div>
<div class="ev" style="left:669.86px;top:449.34px"><span style="letter-spacing:0.09px">Biology -...</span><br><span style="letter-spacing:-0.35px">Perez</span></div>
<div class="ev" style="left:669.86px;top:506.85px"><span style="letter-spacing:-0.27px">Break</span></div>
<div class="ev" style="left:723.21px;top:449.34px"><span style="letter-spacing:0.00px">Chemistr...</span><br><span style="letter-spacing:-0.27px">Cox</span></div>
<div class="ev" style="left:723.21px;top:506.85px"><span style="letter-spacing:-0.27px">Break</span></div>
<div class="ev" style="left:776.55px;top:449.34px"><span style="letter-spacing:0.07px">Literatur...</span><br><span style="letter-spacing:-0.35px">Evans</span></div>
<div class="ev" style="left:776.55px;top:506.85px"><span style="letter-spacing:-0.27px">Break</span></div>
<div class="ev" style="left:829.90px;top:449.34px"><span style="letter-spacing:0.07px">Literatur...</span><br><span style="letter-spacing:-0.29px">Reed</span></div>
<div class="ev" style="left:829.90px;top:506.85px"><span style="letter-spacing:-0.27px">Break</span></div>
<!-- calendar toolbar -->
<svg style="left:203.800px;top:147.300px" width="11.600" height="9.600" viewBox="0 0 11.600 9.600" fill="none" stroke="#3a3a3a" stroke-width="0.900" stroke-linejoin="round" stroke-linecap="round">
<path d="M10 2.600 L10 1.500 Q10 0.500 9 0.500 L1.500 0.500 Q0.500 0.500 0.500 1.500 L0.500 6.600 Q0.500 7.600 1.500 7.600 L4.400 7.600"/><path d="M9.500 3.900 Q10.200 3.300 10.800 3.900 Q11.300 4.500 10.700 5.100 L7.200 8.500 L5.500 9 L6 7.300 Z" stroke-width=".75"/>
</svg>
<div class="t" style="left:220px;top:146.500px;font-size:8.600px;color:#2f2f2f;letter-spacing:-.02px">School Schedule Septe...</div>
<svg style="left:326.300px;top:146.700px" width="1.200" height="10" viewBox="0 0 1.200 10"><rect x="0.100" y="0" width="1" height="10" fill="#d4d4d4"/></svg>
<svg style="left:333.200px;top:149.800px" width="8" height="4.400" viewBox="0 0 8 4.400" fill="none" stroke="#b0b0b0" stroke-width="0.800"><path d="M0.300 0.300 L4 4 L7.700 0.300"/></svg>
<svg style="left:352px;top:146.200px" width="11" height="10.600" viewBox="0 0 11 10.600" fill="none" stroke="#8c8c8c" stroke-width="0.900" stroke-linecap="round" stroke-linejoin="round"><path d="M4.300 0.900 A4.700 4.700 0 1 1 1.900 2.600"/><path d="M2.600 0.500 L4.500 0.900 L3.900 2.700"/></svg>
<svg style="left:372.600px;top:146.300px" width="10.400" height="10.200" viewBox="0 0 10.600 10.600" preserveAspectRatio="none" fill="none" stroke="#8c8c8c" stroke-width="0.900"><rect x="0.500" y="1.300" width="9.600" height="8.800" rx=".6"/><path d="M0.500 3.400 H10.100 M2.800 0.200 V1.600 M7.800 0.200 V1.600"/><path d="M5.300 5 V8.600 M4.200 6 L5.300 5 L6.400 6 M4.200 7.600 L5.300 8.600 L6.400 7.600" stroke-width=".7"/></svg>
<svg style="left:395.400px;top:146.600px" width="6.100" height="10.200" viewBox="0 0 7 11.400" fill="none" stroke="#9a9a9a" stroke-width="0.850"><path d="M6.400 0.400 L0.800 5.700 L6.400 11"/></svg>
<svg style="left:416.100px;top:146.600px" width="6.100" height="10.200" viewBox="0 0 7 11.400" fill="none" stroke="#9a9a9a" stroke-width="0.850"><path d="M0.600 0.400 L6.200 5.700 L0.600 11"/></svg>
<div class="t" style="left:434.500px;top:146.500px;font-size:9px;color:#2f2f2f;letter-spacing:.05px">09/01/2024 - 09/07/2024</div>
<svg style="left:538.700px;top:146px" width="10.800" height="10.200" viewBox="0 0 10.800 10.200" fill="none" stroke="#a8a8a8" stroke-width="0.850"><rect x="0.500" y="1.300" width="9.800" height="8.400" rx=".5"/><path d="M0.500 3.300 H10.300 M2.700 0.100 V1.700 M8.100 0.100 V1.700"/><path d="M2.900 3.600 V9.500 M5.400 3.600 V9.500 M7.900 3.600 V9.500 M0.700 5.500 H10.100 M0.700 7.600 H10.100" stroke-width=".45"/></svg>

<svg style="left:687px;top:147px" width="11" height="10.800" viewBox="0 0 11 10.800" fill="none" stroke="#8c8c8c" stroke-width="0.900" stroke-linecap="round"><circle cx="6.900" cy="4" r="3.500"/><path d="M4.300 6.600 L0.600 10.300"/></svg>
<div class="t" style="left:702.600px;top:146.500px;font-size:8.700px;letter-spacing:-.3px;color:#8c8c8c">Search</div>

<svg style="left:797px;top:146px" width="11.200" height="10.400" viewBox="0 0 11.200 10.400" fill="none" stroke="#3a3a3a" stroke-width="0.900"><rect x="0.500" y="1.300" width="10.200" height="8.600" rx=".5"/><path d="M0.500 3.500 H10.700" stroke-width="1.300"/><path d="M2.700 0.100 V1.700 M8.500 0.100 V1.700"/><path d="M2.600 4 V9.600 M4.600 4 V9.600 M6.600 4 V9.600 M8.600 4 V9.600" stroke-width=".8"/></svg>
<div class="t" style="left:812.800px;top:146.800px;font-size:9.200px;color:#2f2f2f;letter-spacing:-.3px">Week</div>
<svg style="left:875.800px;top:149.800px" width="7.800" height="4.600" viewBox="0 0 7.800 4.600" fill="none" stroke="#9a9a9a" stroke-width="0.800"><path d="M0.400 0.400 L3.900 4 L7.400 0.400"/></svg>
<!-- print -->
<svg style="left:893px;top:146.300px" width="11" height="11" viewBox="0 0 11 10.400" fill="none" stroke="#8c8c8c" stroke-width="0.900" stroke-linejoin="round"><path d="M3.200 3.600 V0.500 H7.800 V3.600"/><rect x="0.500" y="3.600" width="10" height="4.400" rx=".8"/><rect x="2.800" y="6.200" width="5.400" height="3.700" fill="#fafafa"/></svg>
<!-- bell -->
<svg style="left:914.600px;top:146.500px" width="8.600" height="10.600" viewBox="0 0 8.600 10.600" fill="none" stroke="#8c8c8c" stroke-width="0.900" stroke-linejoin="round"><path d="M0.700 8 Q1.500 7.200 1.500 5.600 L1.500 3.600 Q1.500 0.600 4.300 0.600 Q7.100 0.600 7.100 3.600 L7.100 5.600 Q7.100 7.200 7.900 8 Z"/><path d="M3.300 9.400 H5.300 M4.300 8 V9.400"/></svg>
<!-- gear -->
<svg style="left:933.900px;top:146.400px" width="10.400" height="10.400" viewBox="0 0 11 11" fill="none" stroke="#8c8c8c" stroke-width="0.900" stroke-linejoin="round"><path d="M4.35 1.67 L4.59 0.53 L6.41 0.53 L6.65 1.67 L7.40 1.98 L8.37 1.35 L9.65 2.63 L9.02 3.60 L9.33 4.35 L10.47 4.59 L10.47 6.41 L9.33 6.65 L9.02 7.40 L9.65 8.37 L8.37 9.65 L7.40 9.02 L6.65 9.33 L6.41 10.47 L4.59 10.47 L4.35 9.33 L3.60 9.02 L2.63 9.65 L1.35 8.37 L1.98 7.40 L1.67 6.65 L0.53 6.41 L0.53 4.59 L1.67 4.35 L1.98 3.60 L1.35 2.63 L2.63 1.35 L3.60 1.98 Z"/><circle cx="5.5" cy="5.5" r="1.700"/></svg>
<!-- help -->
<svg style="left:954.400px;top:146.300px" width="10.200" height="10.200" viewBox="0 0 10.200 10.200" fill="none" stroke="#8c8c8c" stroke-width="0.850" stroke-linecap="round"><circle cx="5.100" cy="5.100" r="4.600"/><path d="M3.700 4 Q3.700 2.700 5.100 2.700 Q6.500 2.700 6.500 3.900 Q6.500 4.700 5.100 5.400 V6.200" stroke-width=".8"/><circle cx="5.100" cy="7.600" r=".5" fill="#8c8c8c" stroke="none"/></svg>
<!-- popout -->
<svg style="left:975.300px;top:146.100px" width="10.800" height="11.200" viewBox="0 0 10.600 10.400" fill="none" stroke="#8c8c8c" stroke-width="0.900" stroke-linejoin="round" stroke-linecap="round"><path d="M2.400 2.400 V0.500 H10.100 V8 H8.300"/><rect x="0.500" y="2.400" width="7.800" height="7.500"/><path d="M3.500 7 L6.600 3.900 M4.300 3.900 H6.600 V6.200"/></svg>

<!-- legend row -->
<div class="abs" style="left:202.300px;top:165.700px;width:12.400px;height:13px;background:#fff;border:1px solid #c0cbcf;border-radius:1.500px"></div>
<svg style="left:205.200px;top:168.900px" width="6.400" height="6.400" viewBox="0 0 6.400 6.400"><rect x="0" y="0" width="6.400" height="6.400" rx=".7" fill="#5b7b86"/></svg>

<div class="abs" style="left:753.100px;top:167.700px;width:9.100px;height:9.100px;border:1.100px solid #46b063;background:#fff"></div>
<div class="t" style="left:764.700px;top:167.100px;font-size:8.950px;color:#9a9a9a">Group 1-A</div>
<div class="abs" style="left:813.600px;top:167.700px;width:9.100px;height:9.100px;border:1.100px solid #8f8fe6;background:#fff"></div>
<div class="t" style="left:825.500px;top:167.100px;font-size:8.950px;color:#9a9a9a">Group 2-A</div>
<div class="abs" style="left:874.700px;top:167.700px;width:9px;height:9.100px;background:#e8308a"></div>
<div class="t" style="left:886px;top:167.100px;font-size:8.950px;color:#333">Group 3-A</div>
<div class="abs" style="left:935px;top:167.700px;width:9px;height:9.100px;background:#dc143c"></div>
<div class="t" style="left:946.600px;top:167.100px;font-size:8.950px;color:#333">Group 4-A</div>

<!-- red highlight -->
<div class="abs" style="left:736.700px;top:156.200px;width:270.500px;height:29.900px;border:2.500px solid #ff0000"></div>

<!-- inner scrollbar thumb -->
<div class="abs" style="left:985.100px;top:390.700px;width:4.500px;height:100px;background:#7c7c7c;border-radius:2.250px"></div>

<!-- sparkle tab -->
<div class="abs" style="left:1006.300px;top:169.500px;width:24px;height:19.600px;background:#fff;border-radius:6.500px 0 0 6.500px;box-shadow:0 0 3px rgba(0,0,0,.18)"></div>
<svg style="left:1008px;top:173.200px" width="14.600" height="14.600" viewBox="0 0 14 14" fill="#8a55c8">
<path d="M5 2.600 Q5.600 6.600 9.400 7.200 Q5.600 7.800 5 11.800 Q4.400 7.800 0.600 7.200 Q4.400 6.600 5 2.600 Z"/>
<path d="M10.400 0.600 Q10.700 2.600 12.600 2.900 Q10.700 3.200 10.400 5.200 Q10.100 3.200 8.200 2.900 Q10.100 2.600 10.400 0.600 Z"/>
<path d="M10.800 8.800 Q11.050 10.400 12.600 10.650 Q11.050 10.900 10.800 12.500 Q10.550 10.900 9 10.650 Q10.550 10.400 10.800 8.800 Z"/>
</svg>

<!-- bottom shade -->
<div class="abs" style="left:0;top:476px;width:1024px;height:6px;background:linear-gradient(rgba(0,0,0,0),rgba(0,0,0,.05));border-radius:0 0 7px 7px"></div>


</div>
</body>
</html>
